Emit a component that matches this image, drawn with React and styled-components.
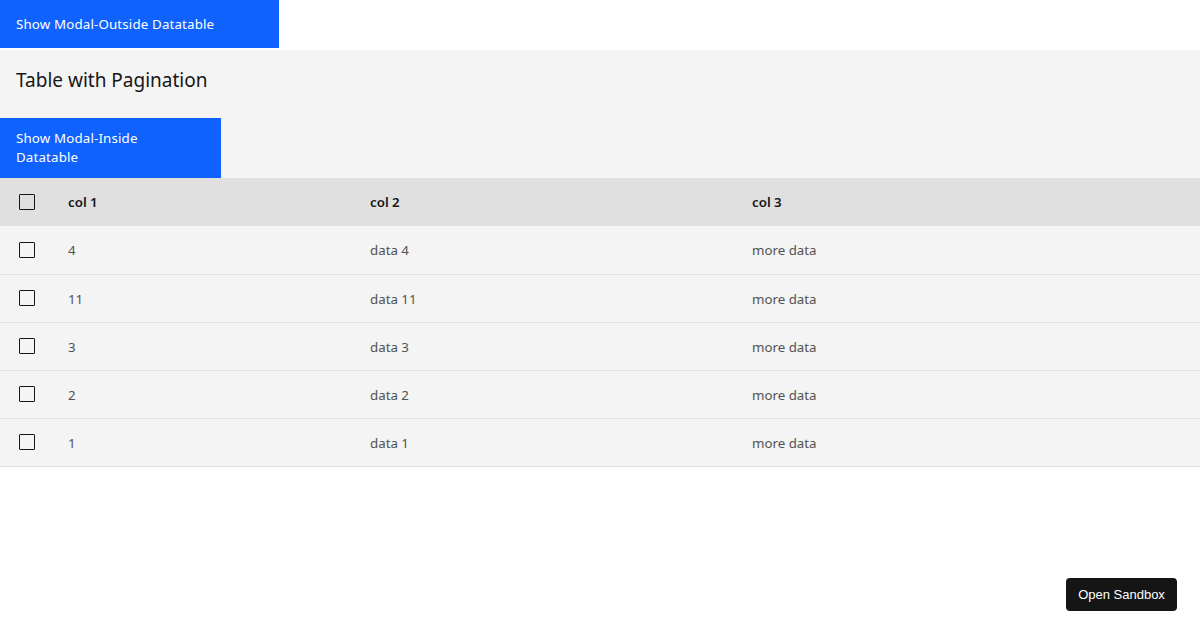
import React from 'react'
import styled, { createGlobalStyle } from 'styled-components'

const GlobalStyle = createGlobalStyle`
  body {
    margin: 0;
    background: #ffffff;
    font-family: "Noto Sans", "Liberation Sans", sans-serif;
    color: #161616;
  }
`

const Page = styled.main`
  display: flex;
  flex-direction: column;
  align-items: flex-start;
`

const PrimaryButton = styled.button`
  box-sizing: border-box;
  width: ${p => p.$width}px;
  min-height: 48px;
  padding: ${p => (p.$nowrap ? '12px 63px 12px 16px' : '11px 63px 12px 16px')};
  border: 0;
  background: #0f62fe;
  color: #ffffff;
  font-family: inherit;
  font-size: 13.3px;
  line-height: 18.5px;
  letter-spacing: 0.16px;
  text-align: left;
  cursor: pointer;
  white-space: ${p => (p.$nowrap ? 'nowrap' : 'normal')};
`

const TableContainer = styled.section`
  width: 100%;
  margin-top: 2px;
  background: #f4f4f4;
`

const TableHeader = styled.div`
  padding: 16px 0 24px 16px;
`

const Title = styled.h4`
  margin: 0;
  font-size: 19px;
  font-weight: 400;
  line-height: 28px;
  color: #161616;
`

const Toolbar = styled.div`
  display: flex;
`

const Table = styled.table`
  width: 100%;
  border-collapse: collapse;
  table-layout: fixed;
`

const HeadCell = styled.th`
  height: 48px;
  padding: 0 16px;
  width: ${p => p.$width || 'auto'};
  background: #e0e0e0;
  text-align: left;
  font-size: 13.3px;
  font-weight: 600;
  color: #161616;
  box-sizing: border-box;
`

const Row = styled.tr`
  border-bottom: 1px solid #e0e0e0;
`

const Cell = styled.td`
  height: 48px;
  padding: 1px 16px 0;
  font-size: 13.3px;
  color: #525252;
  box-sizing: border-box;
`

const CheckCell = styled.td`
  padding: 0 0 0 19px;
  box-sizing: border-box;
`

const CheckHead = styled(HeadCell)`
  padding: 0 0 0 19px;
`

const Checkbox = styled.span`
  display: block;
  width: 16px;
  height: 16px;
  box-sizing: border-box;
  border: 1px solid #161616;
  border-radius: 1px;
`

const SandboxButton = styled.button`
  position: fixed;
  right: 23px;
  bottom: 19px;
  width: 111px;
  height: 33px;
  border: 0;
  border-radius: 4px;
  background: #151515;
  color: #ffffff;
  font-family: "Liberation Sans", Arial, sans-serif;
  font-size: 13px;
  cursor: pointer;
`

const rows = [
  { id: '4', name: 'data 4' },
  { id: '11', name: 'data 11' },
  { id: '3', name: 'data 3' },
  { id: '2', name: 'data 2' },
  { id: '1', name: 'data 1' },
]

const App = () => {
  return (
    <Page>
      <GlobalStyle />
      <PrimaryButton $width={279} $nowrap>Show Modal-Outside Datatable</PrimaryButton>
      <TableContainer>
        <TableHeader>
          <Title>Table with Pagination</Title>
        </TableHeader>
        <Toolbar>
          <PrimaryButton $width={221}>Show Modal-Inside Datatable</PrimaryButton>
        </Toolbar>
        <Table>
          <thead>
            <tr>
              <CheckHead $width="52px">
                <Checkbox />
              </CheckHead>
              <HeadCell $width="302px">col 1</HeadCell>
              <HeadCell $width="382px">col 2</HeadCell>
              <HeadCell>col 3</HeadCell>
            </tr>
          </thead>
          <tbody>
            {rows.map(r => (
              <Row key={r.id}>
                <CheckCell>
                  <Checkbox />
                </CheckCell>
                <Cell>{r.id}</Cell>
                <Cell>{r.name}</Cell>
                <Cell>more data</Cell>
              </Row>
            ))}
          </tbody>
        </Table>
      </TableContainer>
      <SandboxButton>Open Sandbox</SandboxButton>
    </Page>
  )
}

export default App
